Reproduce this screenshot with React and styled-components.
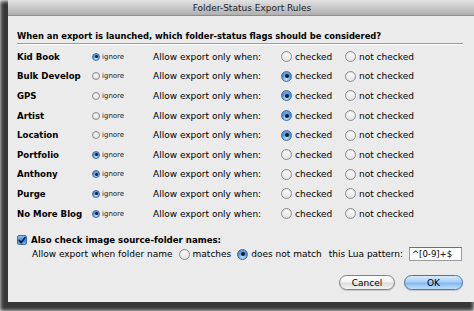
import React from "react";
import styled, { createGlobalStyle, css } from "styled-components";

const rules = [
  { name: "Kid Book", ignore: true, when: null },
  { name: "Bulk Develop", ignore: false, when: "checked" },
  { name: "GPS", ignore: false, when: "checked" },
  { name: "Artist", ignore: false, when: "checked" },
  { name: "Location", ignore: false, when: "checked" },
  { name: "Portfolio", ignore: true, when: null },
  { name: "Anthony", ignore: true, when: null },
  { name: "Purge", ignore: true, when: null },
  { name: "No More Blog", ignore: true, when: null },
];

const Global = createGlobalStyle`
  html, body {
    margin: 0;
    padding: 0;
    background: #fff;
    overflow: hidden;
  }
  body {
    font-family: "DejaVu Sans", "Liberation Sans", sans-serif;
    color: #000;
  }
`;

const Stage = styled.div`
  width: 474px;
  height: 311px;
  overflow: hidden;
`;

const Win = styled.div`
  margin-left: 8px;
  width: 466px;
  height: 302px;
  background: #ebebeb;
  display: flex;
  flex-direction: column;
  box-shadow: -4px 5px 4px 4px rgba(20, 20, 20, 0.85);
`;

const TitleBar = styled.div`
  height: 15px;
  flex: none;
  display: flex;
  align-items: center;
  justify-content: center;
  padding-left: 22px;
  font-size: 9px;
  color: #1e1e1e;
  background: linear-gradient(#e2e2e2, #c4c4c4 60%, #b0b0b0);
  border-bottom: 1px solid #8d8d8d;
`;

const Body = styled.div`
  padding: 14px 11px 0 9px;
  display: flex;
  flex-direction: column;
`;

const Heading = styled.div`
  font-size: 8.4px;
  font-weight: bold;
  line-height: 12px;
  padding-bottom: 1px;
  border-bottom: 1px solid #9c9c9c;
  box-shadow: 0 1px 0 #fff;
`;

const Grid = styled.div`
  margin-top: 3px;
  display: grid;
  grid-template-columns: 75px 61px 128px 64px auto;
  grid-auto-rows: 19.6px;
  align-items: center;
  font-size: 9px;
`;

const Name = styled.div`
  font-weight: bold;
  font-size: 8.6px;
`;

const Choice = styled.label`
  display: flex;
  align-items: center;
  gap: ${(p) => (p.$small ? "2px" : "3px")};
  font-size: ${(p) => (p.$small ? "7px" : "9px")};
  color: ${(p) => (p.$small ? "#222" : "#000")};
  white-space: nowrap;
`;

const Dot = styled.span`
  flex: none;
  box-sizing: border-box;
  width: ${(p) => (p.$small ? "8px" : "11px")};
  height: ${(p) => (p.$small ? "8px" : "11px")};
  border-radius: 50%;
  position: relative;
  border: 1px solid #8c8c8c;
  background: linear-gradient(#ffffff, #f1f1f1 50%, #e2e2e2);
  box-shadow: inset 0 1px 1px rgba(0, 0, 0, 0.12);
  ${(p) =>
    p.$on &&
    css`
      border-color: #3f6ea8;
      background: radial-gradient(circle at 50% 75%, #c4e2fd, transparent 60%),
        linear-gradient(#7fb4ec, #3c84d8 50%, #6aa9ee);
      &::after {
        content: "";
        position: absolute;
        left: 50%;
        top: 50%;
        width: ${p.$small ? "3px" : "4px"};
        height: ${p.$small ? "3px" : "4px"};
        margin: ${p.$small ? "-1.5px 0 0 -1.5px" : "-2px 0 0 -2px"};
        border-radius: 50%;
        background: #111a2a;
      }
    `}
`;

const Radio = ({ on, small, children }) => (
  <Choice $small={small}>
    <Dot $on={on} $small={small} />
    {children}
  </Choice>
);

const CheckRow = styled.div`
  margin-top: 10px;
  height: 14px;
  display: flex;
  align-items: center;
  gap: 4px;
  font-size: 8.6px;
  font-weight: bold;
`;

const Box = styled.span`
  width: 10px;
  height: 10px;
  box-sizing: border-box;
  border: 1px solid #3f6ea8;
  border-radius: 2px;
  background: linear-gradient(#8fc0f0, #3f87da 55%, #79b3ef);
  display: flex;
  align-items: center;
  justify-content: center;
`;

const PatternRow = styled.div`
  height: 14px;
  padding-left: 15px;
  display: flex;
  align-items: center;
  font-size: 9px;
  white-space: nowrap;
`;

const Gap = styled.span`
  display: inline-block;
  width: ${(p) => p.$w}px;
`;

const Field = styled.div`
  box-sizing: border-box;
  width: 53px;
  height: 14px;
  padding-left: 2px;
  display: flex;
  align-items: center;
  background: #fff;
  border: 1px solid #9a9a9a;
  border-top-color: #6f6f6f;
  font-size: 8.5px;
`;

const Buttons = styled.div`
  margin-top: 14px;
  display: flex;
  justify-content: flex-end;
  gap: 9px;
`;

const Pill = styled.button`
  box-sizing: border-box;
  width: ${(p) => p.$w}px;
  height: 15px;
  padding: 0;
  border-radius: 8px;
  font-family: inherit;
  font-size: 9px;
  color: #000;
  border: 1px solid #7f7f7f;
  background: linear-gradient(#ffffff, #f3f3f3 45%, #dcdcdc 55%, #f4f4f4);
  box-shadow: 0 1px 1px rgba(0, 0, 0, 0.15);
  ${(p) =>
    p.$primary &&
    css`
      border-color: #4d73a6;
      background: linear-gradient(#d8ebfc, #a9cff5 45%, #83b8ef 55%, #c2e0fb);
    `}
`;

export default function App() {
  return (
    <Stage>
      <Global />
      <Win>
        <TitleBar>Folder-Status Export Rules</TitleBar>
        <Body>
          <Heading>
            When an export is launched, which folder-status flags should be
            considered?
          </Heading>
          <Grid>
            {rules.map((r) => (
              <React.Fragment key={r.name}>
                <Name>{r.name}</Name>
                <Radio small on={r.ignore}>
                  ignore
                </Radio>
                <div>Allow export only when:</div>
                <Radio on={r.when === "checked"}>checked</Radio>
                <Radio on={r.when === "not"}>not checked</Radio>
              </React.Fragment>
            ))}
          </Grid>
          <CheckRow>
            <Box>
              <svg width="9" height="9" viewBox="0 0 9 9">
                <path
                  d="M1.5 4.5 L3.6 7 L7.8 1.2"
                  fill="none"
                  stroke="#0d1a33"
                  strokeWidth="1.8"
                  strokeLinecap="round"
                  strokeLinejoin="round"
                />
              </svg>
            </Box>
            Also check image source-folder names:
          </CheckRow>
          <PatternRow>
            Allow export when folder name
            <Gap $w={6} />
            <Radio>matches</Radio>
            <Gap $w={6} />
            <Radio on>does not match</Radio>
            <Gap $w={7} />
            this Lua pattern:
            <Gap $w={6} />
            <Field>^[0-9]+$</Field>
          </PatternRow>
          <Buttons>
            <Pill $w={56}>Cancel</Pill>
            <Pill $w={59} $primary>
              OK
            </Pill>
          </Buttons>
        </Body>
      </Win>
    </Stage>
  );
}
